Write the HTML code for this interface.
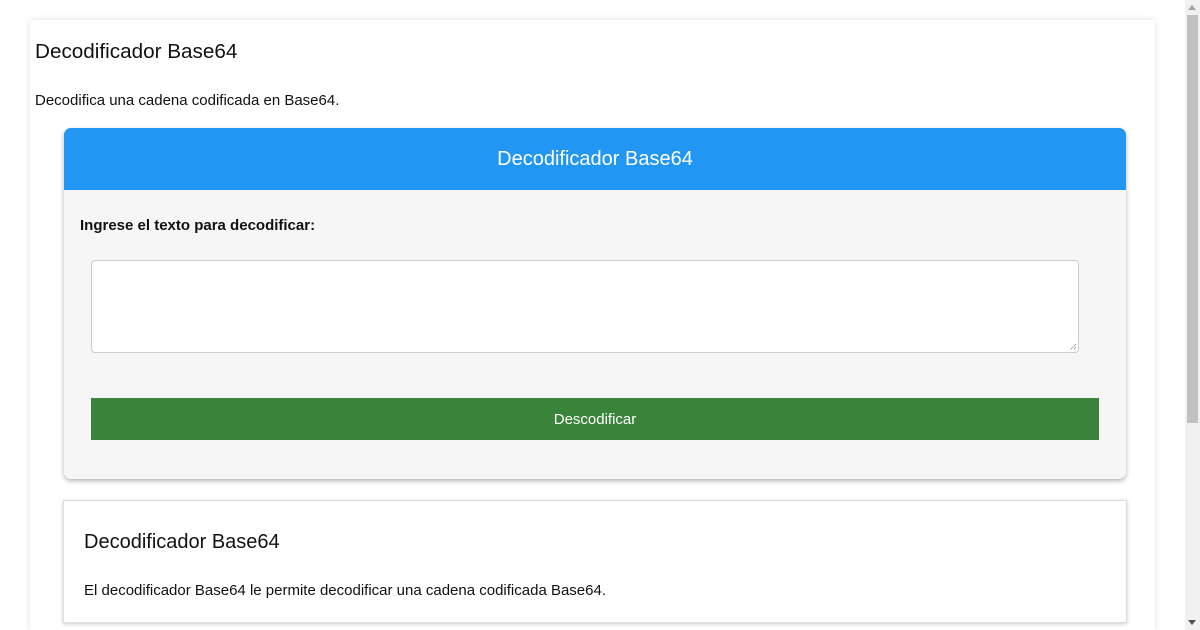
<!DOCTYPE html>
<html><head><style>
*{box-sizing:border-box}
html,body{margin:0;width:1200px;height:630px;overflow:hidden}
body{background:#fff;font-family:"Liberation Sans",sans-serif;position:relative}
.main{position:absolute;left:30px;top:20px;width:1125px;height:610px;background:#fff;box-shadow:0 0 6px rgba(0,0,0,.12)}
h1{position:absolute;left:5px;top:20px;margin:0;font-size:20.7px;font-weight:normal;color:#111}
.sub{position:absolute;left:5px;top:72px;font-size:15px;color:#111}
.card{position:absolute;left:34px;top:108px;width:1062px;height:351px;background:#f6f6f6;border-radius:7px;box-shadow:0 2px 5px rgba(0,0,0,.3);overflow:hidden}
.hd{height:62px;background:#2196f3;color:#fff;font-size:20px;text-align:center;line-height:63px}
.lbl{position:absolute;left:16px;top:89px;font-size:15px;font-weight:bold;color:#111}
.ta{position:absolute;left:27px;top:132px;width:988px;height:93px;background:#fff;border:1px solid #ccc;border-radius:4px}
.btn{position:absolute;left:27px;top:270px;width:1008px;height:42px;background:#3a833a;color:#fff;font-size:15px;text-align:center;line-height:43px}
.box{position:absolute;left:33px;top:480px;width:1064px;height:123px;background:#fff;border:1px solid #ddd;box-shadow:0 1px 4px rgba(0,0,0,.2)}
.box h2{position:absolute;left:20px;top:30px;margin:0;font-size:20px;font-weight:normal;color:#111}
.box p{position:absolute;left:20px;top:81px;margin:0;font-size:15px;color:#111}
.sb{position:absolute;left:1185px;top:0;width:15px;height:630px;background:#f1f1f1}
.th{position:absolute;left:1187px;top:15px;width:11px;height:408px;background:#c1c1c1}
</style></head><body>
<div class="main">
<h1>Decodificador Base64</h1>
<div class="sub">Decodifica una cadena codificada en Base64.</div>
<div class="card"><div class="hd">Decodificador Base64</div>
<div class="lbl">Ingrese el texto para decodificar:</div>
<div class="ta"><svg style="position:absolute;right:1px;bottom:1px" width="8" height="8"><path d="M7 1L1 7M7 4L4 7" stroke="#777" stroke-width="1" stroke-dasharray="1 1"/></svg></div>
<div class="btn">Descodificar</div></div>
<div class="box"><h2>Decodificador Base64</h2><p>El decodificador Base64 le permite decodificar una cadena codificada Base64.</p></div>
</div>
<div class="sb"></div><div class="th"></div>
<div style="position:absolute;left:1188px;top:5px;width:0;height:0;border-left:4.5px solid transparent;border-right:4.5px solid transparent;border-bottom:5px solid #a3a3a3"></div>
<div style="position:absolute;left:1188px;top:620px;width:0;height:0;border-left:4.5px solid transparent;border-right:4.5px solid transparent;border-top:5px solid #505050"></div>
</body></html>
